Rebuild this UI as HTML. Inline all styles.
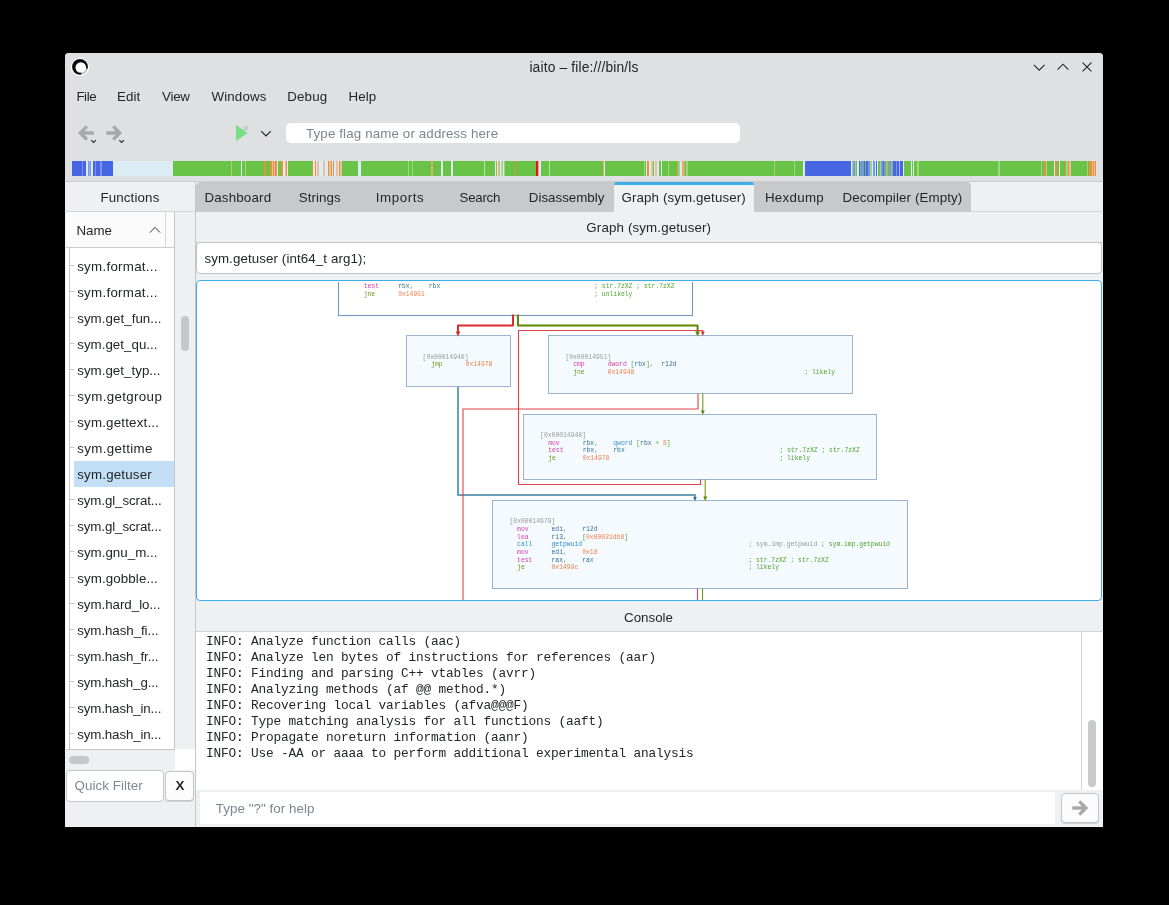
<!DOCTYPE html>
<html><head><meta charset="utf-8"><title>iaito</title>
<style>
html,body{margin:0;padding:0;background:#000;}
body{width:1169px;height:905px;position:relative;overflow:hidden;font-family:"Liberation Sans",sans-serif;}
div{position:absolute;box-sizing:border-box;}
svg{position:absolute;overflow:visible;}
.t{white-space:pre;}
.m{font-family:"Liberation Mono",monospace;white-space:pre;}
</style></head><body>
<div id="root" style="left:0;top:0;width:1169px;height:905px;will-change:transform;">

<div style="left:65px;top:53px;width:1038px;height:774px;background:#eff0f1;border-radius:4px 4px 0 0;overflow:hidden;"></div>
<div style="left:65px;top:53px;width:1038px;height:128px;background:#dee0e2;border-radius:4px 4px 0 0;"></div>
<div style="left:65px;top:181px;width:1038px;height:1px;background:#c9cbcd;"></div>
<svg style="left:70px;top:57px" width="20" height="20" viewBox="0 0 20 20">
<circle cx="10" cy="9.9" r="9.2" fill="#fff"/>
<circle cx="10" cy="9.8" r="7.9" fill="#0a0a0a"/>
<circle cx="10.8" cy="10.5" r="5.3" fill="#fff"/>
<path d="M10.6 18.4 A8.6 8.6 0 0 0 18 12.2 L14 10 Z" fill="#fff" opacity="0.72"/>
</svg>
<div class="t" style="left:529.40px;top:58.00px;line-height:20px;font-size:13.8px;color:#232629;letter-spacing:0.154px;">iaito – file:///bin/ls</div>
<div class="t" style="left:76.40px;top:87.00px;line-height:20px;font-size:13.33px;color:#232629;letter-spacing:-0.428px;">File</div>
<div class="t" style="left:117.10px;top:87.00px;line-height:20px;font-size:13.33px;color:#232629;letter-spacing:0.010px;">Edit</div>
<div class="t" style="left:162.00px;top:87.00px;line-height:20px;font-size:13.33px;color:#232629;letter-spacing:-0.219px;">View</div>
<div class="t" style="left:211.60px;top:87.00px;line-height:20px;font-size:13.33px;color:#232629;letter-spacing:0.106px;">Windows</div>
<div class="t" style="left:287.20px;top:87.00px;line-height:20px;font-size:13.33px;color:#232629;letter-spacing:0.188px;">Debug</div>
<div class="t" style="left:348.50px;top:87.00px;line-height:20px;font-size:13.33px;color:#232629;letter-spacing:0.098px;">Help</div>
<svg style="left:0;top:0" width="1169" height="905" viewBox="0 0 1169 905">
<path d="M78 133 L85.7 125.2 L88.1 127.6 L84.5 131.2 L93.9 131.2 L93.9 134.8 L84.5 134.8 L88.1 138.4 L85.7 140.8 Z" fill="#a6a8ab"/>
<path d="M122.1 133 L114.4 125.2 L112 127.6 L115.6 131.2 L106.2 131.2 L106.2 134.8 L115.6 134.8 L112 138.4 L114.4 140.8 Z" fill="#a6a8ab"/>
<path d="M236 125 L247.7 133 L236 141 Z" fill="#78de86"/>
</svg>
<svg style="left:0;top:0" width="1169" height="905" viewBox="0 0 1169 905"><text x="243.9" y="129.7" font-family="Liberation Sans, sans-serif" font-size="6" fill="#a4a6a9">D</text></svg>
<div style="left:286px;top:123px;width:454px;height:20px;background:#fff;border-radius:5px;"></div>
<div class="t" style="left:306.00px;top:124.00px;line-height:20px;font-size:13.33px;color:#7a8791;letter-spacing:0.134px;">Type flag name or address here</div>
<svg style="left:0;top:0" width="1169" height="905" viewBox="0 0 1169 905" shape-rendering="crispEdges">
<rect x="72" y="161" width="1024" height="15" fill="#68c346"/>
<rect x="72" y="161" width="10.00" height="15" fill="#4666e4"/>
<rect x="82" y="161" width="1.00" height="15" fill="#7a93ec"/>
<rect x="83" y="161" width="3.30" height="15" fill="#4666e4"/>
<rect x="86.3" y="161" width="1.70" height="15" fill="#dcecf5"/>
<rect x="88" y="161" width="1.00" height="15" fill="#7a93ec"/>
<rect x="89" y="161" width="1.00" height="15" fill="#9db0f0"/>
<rect x="90" y="161" width="0.80" height="15" fill="#7a93ec"/>
<rect x="90.8" y="161" width="2.20" height="15" fill="#dcecf5"/>
<rect x="93" y="161" width="1.60" height="15" fill="#4666e4"/>
<rect x="94.6" y="161" width="1.00" height="15" fill="#7a93ec"/>
<rect x="95.6" y="161" width="4.80" height="15" fill="#4666e4"/>
<rect x="100.4" y="161" width="1.40" height="15" fill="#7a93ec"/>
<rect x="101.8" y="161" width="10.90" height="15" fill="#4666e4"/>
<rect x="112.7" y="161" width="59.80" height="15" fill="#dcecf5"/>
<rect x="230.6" y="161" width="1.40" height="15" fill="#9bd683"/>
<rect x="241" y="161" width="1.00" height="15" fill="#dcecf5"/>
<rect x="245" y="161" width="1.00" height="15" fill="#9bd683"/>
<rect x="264" y="161" width="2.20" height="15" fill="#e8913c"/>
<rect x="270" y="161" width="1.60" height="15" fill="#e8913c"/>
<rect x="271.6" y="161" width="1.00" height="15" fill="#e8c19b"/>
<rect x="272.6" y="161" width="1.40" height="15" fill="#e8913c"/>
<rect x="274" y="161" width="1.00" height="15" fill="#e8c19b"/>
<rect x="275" y="161" width="2.00" height="15" fill="#e8913c"/>
<rect x="277" y="161" width="1.00" height="15" fill="#dcecf5"/>
<rect x="281" y="161" width="2.20" height="15" fill="#e8913c"/>
<rect x="283.2" y="161" width="1.80" height="15" fill="#dcecf5"/>
<rect x="285" y="161" width="1.00" height="15" fill="#e8c19b"/>
<rect x="286" y="161" width="1.20" height="15" fill="#e8913c"/>
<rect x="287.2" y="161" width="1.10" height="15" fill="#dcecf5"/>
<rect x="312" y="161" width="1.00" height="15" fill="#e8913c"/>
<rect x="313" y="161" width="2.00" height="15" fill="#dcecf5"/>
<rect x="315" y="161" width="1.00" height="15" fill="#e8913c"/>
<rect x="316" y="161" width="1.00" height="15" fill="#dcecf5"/>
<rect x="317" y="161" width="2.00" height="15" fill="#e8c19b"/>
<rect x="319" y="161" width="3.80" height="15" fill="#dcecf5"/>
<rect x="322.8" y="161" width="2.20" height="15" fill="#e8c19b"/>
<rect x="325" y="161" width="3.00" height="15" fill="#dcecf5"/>
<rect x="328" y="161" width="1.00" height="15" fill="#e8913c"/>
<rect x="329" y="161" width="1.60" height="15" fill="#e8c19b"/>
<rect x="330.6" y="161" width="1.40" height="15" fill="#e8913c"/>
<rect x="332" y="161" width="1.00" height="15" fill="#dcecf5"/>
<rect x="333" y="161" width="1.00" height="15" fill="#e8913c"/>
<rect x="334" y="161" width="2.00" height="15" fill="#dcecf5"/>
<rect x="336" y="161" width="1.60" height="15" fill="#e8c19b"/>
<rect x="337.6" y="161" width="1.40" height="15" fill="#dcecf5"/>
<rect x="339" y="161" width="1.20" height="15" fill="#e8913c"/>
<rect x="340.2" y="161" width="1.60" height="15" fill="#e8c19b"/>
<rect x="358" y="161" width="3.00" height="15" fill="#dcecf5"/>
<rect x="408" y="161" width="1.00" height="15" fill="#9bd683"/>
<rect x="412" y="161" width="1.00" height="15" fill="#9bd683"/>
<rect x="431.2" y="161" width="1.80" height="15" fill="#dcab6c"/>
<rect x="441" y="161" width="2.00" height="15" fill="#dcecf5"/>
<rect x="451" y="161" width="2.20" height="15" fill="#dcecf5"/>
<rect x="484" y="161" width="1.20" height="15" fill="#b9e2ab"/>
<rect x="495" y="161" width="1.00" height="15" fill="#dcecf5"/>
<rect x="496" y="161" width="1.00" height="15" fill="#e8913c"/>
<rect x="497" y="161" width="1.00" height="15" fill="#dcecf5"/>
<rect x="498" y="161" width="1.60" height="15" fill="#9bd683"/>
<rect x="499.6" y="161" width="0.90" height="15" fill="#dcecf5"/>
<rect x="500.5" y="161" width="1.50" height="15" fill="#e8c19b"/>
<rect x="502" y="161" width="1.00" height="15" fill="#9bd683"/>
<rect x="503" y="161" width="1.00" height="15" fill="#dcecf5"/>
<rect x="504" y="161" width="1.00" height="15" fill="#9bd683"/>
<rect x="513.8" y="161" width="1.20" height="15" fill="#e8913c"/>
<rect x="536" y="161" width="2.20" height="15" fill="#f01010"/>
<rect x="538.2" y="161" width="1.00" height="15" fill="#f0a0a0"/>
<rect x="539.2" y="161" width="2.10" height="15" fill="#dcecf5"/>
<rect x="548.8" y="161" width="1.40" height="15" fill="#b9e2ab"/>
<rect x="603" y="161" width="1.20" height="15" fill="#dcab6c"/>
<rect x="604.2" y="161" width="0.80" height="15" fill="#dcecf5"/>
<rect x="643.8" y="161" width="1.20" height="15" fill="#9bd683"/>
<rect x="646" y="161" width="1.00" height="15" fill="#dcecf5"/>
<rect x="647" y="161" width="2.00" height="15" fill="#e8913c"/>
<rect x="649" y="161" width="2.00" height="15" fill="#dcecf5"/>
<rect x="651" y="161" width="1.80" height="15" fill="#e8c19b"/>
<rect x="654" y="161" width="1.00" height="15" fill="#dcecf5"/>
<rect x="655" y="161" width="2.00" height="15" fill="#e8c19b"/>
<rect x="657" y="161" width="1.80" height="15" fill="#dcecf5"/>
<rect x="660.7" y="161" width="1.30" height="15" fill="#dcecf5"/>
<rect x="668" y="161" width="1.00" height="15" fill="#9bd683"/>
<rect x="677" y="161" width="1.20" height="15" fill="#e8913c"/>
<rect x="678.2" y="161" width="1.80" height="15" fill="#9bd683"/>
<rect x="680" y="161" width="2.20" height="15" fill="#dcecf5"/>
<rect x="682.2" y="161" width="2.40" height="15" fill="#dcab6c"/>
<rect x="686" y="161" width="1.60" height="15" fill="#9bd683"/>
<rect x="774" y="161" width="1.00" height="15" fill="#9bd683"/>
<rect x="794" y="161" width="1.00" height="15" fill="#9bd683"/>
<rect x="803" y="161" width="2.00" height="15" fill="#dcecf5"/>
<rect x="805" y="161" width="46.00" height="15" fill="#4666e4"/>
<rect x="851" y="161" width="1.00" height="15" fill="#dcecf5"/>
<rect x="852" y="161" width="1.00" height="15" fill="#9bd683"/>
<rect x="853" y="161" width="1.60" height="15" fill="#7a93ec"/>
<rect x="854.6" y="161" width="1.00" height="15" fill="#9bd683"/>
<rect x="857" y="161" width="2.00" height="15" fill="#dcecf5"/>
<rect x="859" y="161" width="1.00" height="15" fill="#4666e4"/>
<rect x="861" y="161" width="2.60" height="15" fill="#7a93ec"/>
<rect x="863.6" y="161" width="1.40" height="15" fill="#4666e4"/>
<rect x="866" y="161" width="1.80" height="15" fill="#4666e4"/>
<rect x="867.8" y="161" width="2.20" height="15" fill="#7a93ec"/>
<rect x="870" y="161" width="2.00" height="15" fill="#9bd683"/>
<rect x="872" y="161" width="1.00" height="15" fill="#dcecf5"/>
<rect x="873" y="161" width="1.50" height="15" fill="#7a93ec"/>
<rect x="874.5" y="161" width="1.00" height="15" fill="#dcecf5"/>
<rect x="875.5" y="161" width="1.50" height="15" fill="#4666e4"/>
<rect x="877" y="161" width="1.00" height="15" fill="#dcecf5"/>
<rect x="879.6" y="161" width="1.40" height="15" fill="#9bd683"/>
<rect x="881" y="161" width="2.00" height="15" fill="#7a93ec"/>
<rect x="883" y="161" width="1.30" height="15" fill="#4666e4"/>
<rect x="884.3" y="161" width="1.70" height="15" fill="#7aa99a"/>
<rect x="886" y="161" width="2.00" height="15" fill="#8fc47a"/>
<rect x="888" y="161" width="2.50" height="15" fill="#7aa99a"/>
<rect x="890.5" y="161" width="2.00" height="15" fill="#8fb0a8"/>
<rect x="892.5" y="161" width="3.50" height="15" fill="#4666e4"/>
<rect x="896" y="161" width="1.00" height="15" fill="#7a93ec"/>
<rect x="897" y="161" width="2.00" height="15" fill="#4666e4"/>
<rect x="899" y="161" width="1.00" height="15" fill="#a8b8f2"/>
<rect x="900" y="161" width="3.00" height="15" fill="#4666e4"/>
<rect x="903" y="161" width="1.00" height="15" fill="#dcecf5"/>
<rect x="910.8" y="161" width="1.20" height="15" fill="#dcecf5"/>
<rect x="913" y="161" width="1.00" height="15" fill="#dcecf5"/>
<rect x="917" y="161" width="2.00" height="15" fill="#9bd683"/>
<rect x="998" y="161" width="1.50" height="15" fill="#9bd683"/>
<rect x="1041" y="161" width="1.00" height="15" fill="#9bd683"/>
<rect x="1043.6" y="161" width="2.40" height="15" fill="#e8913c"/>
<rect x="1046" y="161" width="1.00" height="15" fill="#9bd683"/>
<rect x="1054" y="161" width="1.00" height="15" fill="#dcecf5"/>
<rect x="1055" y="161" width="1.50" height="15" fill="#e8913c"/>
<rect x="1056.5" y="161" width="0.70" height="15" fill="#e8c19b"/>
<rect x="1059" y="161" width="1.20" height="15" fill="#dcecf5"/>
<rect x="1065" y="161" width="1.00" height="15" fill="#e8913c"/>
<rect x="1066" y="161" width="2.00" height="15" fill="#9bd683"/>
<rect x="1068" y="161" width="1.20" height="15" fill="#e8913c"/>
<rect x="1069.2" y="161" width="2.00" height="15" fill="#e8c19b"/>
<rect x="1087" y="161" width="1.00" height="15" fill="#9bd683"/>
<rect x="1089" y="161" width="2.50" height="15" fill="#e8913c"/>
<rect x="1091.5" y="161" width="1.00" height="15" fill="#e8c19b"/>
<rect x="1092.5" y="161" width="1.50" height="15" fill="#e8913c"/>
<rect x="1094" y="161" width="1.00" height="15" fill="#e8c19b"/>
<rect x="1095" y="161" width="1.00" height="15" fill="#e8913c"/>
</svg>
<div style="left:65px;top:182px;width:130px;height:645px;background:#eff0f1;"></div>
<div style="left:195px;top:182px;width:1px;height:645px;background:#c4c6c8;"></div>
<div class="t" style="left:100.40px;top:188.00px;line-height:20px;font-size:13.33px;color:#232629;letter-spacing:0.140px;">Functions</div>
<div style="left:65px;top:211px;width:130px;height:1px;background:#d3d5d7;"></div>
<div style="left:66px;top:212px;width:109px;height:538px;background:#fff;border-bottom:1px solid #c4c6c8;"></div>
<div style="left:66px;top:212px;width:109px;height:35px;background:#fbfbfc;"></div>
<div style="left:66px;top:247px;width:109px;height:1px;background:#c9cbcd;"></div>
<div style="left:165px;top:212px;width:1px;height:35px;background:#d6d8da;"></div>
<div style="left:174px;top:212px;width:1px;height:538px;background:#c4c6c8;"></div>
<div class="t" style="left:76.40px;top:221.00px;line-height:20px;font-size:13.33px;color:#232629;letter-spacing:0.018px;">Name</div>
<div style="left:74px;top:461px;width:100px;height:26px;background:#c2dff5;"></div>
<div style="left:69px;top:248px;width:1px;height:502px;background:#c3c5c7;"></div>
<div style="left:70px;top:265px;width:4px;height:1px;background:#c3c5c7;"></div>
<div class="t" style="left:77.20px;top:257.00px;line-height:20px;font-size:13.33px;color:#232629;letter-spacing:0.272px;">sym.format...</div>
<div style="left:70px;top:291px;width:4px;height:1px;background:#c3c5c7;"></div>
<div class="t" style="left:77.20px;top:283.00px;line-height:20px;font-size:13.33px;color:#232629;letter-spacing:0.272px;">sym.format...</div>
<div style="left:70px;top:317px;width:4px;height:1px;background:#c3c5c7;"></div>
<div class="t" style="left:77.20px;top:309.00px;line-height:20px;font-size:13.33px;color:#232629;letter-spacing:0.046px;">sym.get_fun...</div>
<div style="left:70px;top:343px;width:4px;height:1px;background:#c3c5c7;"></div>
<div class="t" style="left:77.20px;top:335.00px;line-height:20px;font-size:13.33px;color:#232629;letter-spacing:0.025px;">sym.get_qu...</div>
<div style="left:70px;top:369px;width:4px;height:1px;background:#c3c5c7;"></div>
<div class="t" style="left:77.20px;top:361.00px;line-height:20px;font-size:13.33px;color:#232629;letter-spacing:0.025px;">sym.get_typ...</div>
<div style="left:70px;top:395px;width:4px;height:1px;background:#c3c5c7;"></div>
<div class="t" style="left:77.20px;top:387.00px;line-height:20px;font-size:13.33px;color:#232629;letter-spacing:0.351px;">sym.getgroup</div>
<div style="left:70px;top:421px;width:4px;height:1px;background:#c3c5c7;"></div>
<div class="t" style="left:77.20px;top:413.00px;line-height:20px;font-size:13.33px;color:#232629;letter-spacing:0.195px;">sym.gettext...</div>
<div style="left:70px;top:447px;width:4px;height:1px;background:#c3c5c7;"></div>
<div class="t" style="left:77.20px;top:439.00px;line-height:20px;font-size:13.33px;color:#232629;letter-spacing:0.344px;">sym.gettime</div>
<div class="t" style="left:77.20px;top:465.00px;line-height:20px;font-size:13.33px;color:#232629;letter-spacing:0.201px;">sym.getuser</div>
<div style="left:70px;top:499px;width:4px;height:1px;background:#c3c5c7;"></div>
<div class="t" style="left:77.20px;top:491.00px;line-height:20px;font-size:13.33px;color:#232629;letter-spacing:-0.096px;">sym.gl_scrat...</div>
<div style="left:70px;top:525px;width:4px;height:1px;background:#c3c5c7;"></div>
<div class="t" style="left:77.20px;top:517.00px;line-height:20px;font-size:13.33px;color:#232629;letter-spacing:-0.096px;">sym.gl_scrat...</div>
<div style="left:70px;top:551px;width:4px;height:1px;background:#c3c5c7;"></div>
<div class="t" style="left:77.20px;top:543.00px;line-height:20px;font-size:13.33px;color:#232629;letter-spacing:0.027px;">sym.gnu_m...</div>
<div style="left:70px;top:577px;width:4px;height:1px;background:#c3c5c7;"></div>
<div class="t" style="left:77.20px;top:569.00px;line-height:20px;font-size:13.33px;color:#232629;letter-spacing:0.111px;">sym.gobble...</div>
<div style="left:70px;top:603px;width:4px;height:1px;background:#c3c5c7;"></div>
<div class="t" style="left:77.20px;top:595.00px;line-height:20px;font-size:13.33px;color:#232629;letter-spacing:-0.031px;">sym.hard_lo...</div>
<div style="left:70px;top:629px;width:4px;height:1px;background:#c3c5c7;"></div>
<div class="t" style="left:77.20px;top:621.00px;line-height:20px;font-size:13.33px;color:#232629;letter-spacing:-0.072px;">sym.hash_fi...</div>
<div style="left:70px;top:655px;width:4px;height:1px;background:#c3c5c7;"></div>
<div class="t" style="left:77.20px;top:647.00px;line-height:20px;font-size:13.33px;color:#232629;letter-spacing:-0.128px;">sym.hash_fr...</div>
<div style="left:70px;top:681px;width:4px;height:1px;background:#c3c5c7;"></div>
<div class="t" style="left:77.20px;top:673.00px;line-height:20px;font-size:13.33px;color:#232629;letter-spacing:-0.139px;">sym.hash_g...</div>
<div style="left:70px;top:707px;width:4px;height:1px;background:#c3c5c7;"></div>
<div class="t" style="left:77.20px;top:699.00px;line-height:20px;font-size:13.33px;color:#232629;letter-spacing:-0.126px;">sym.hash_in...</div>
<div style="left:70px;top:733px;width:4px;height:1px;background:#c3c5c7;"></div>
<div class="t" style="left:77.20px;top:725.00px;line-height:20px;font-size:13.33px;color:#232629;letter-spacing:-0.126px;">sym.hash_in...</div>
<div style="left:181px;top:316px;width:8px;height:35px;background:#c5c8ca;border-radius:4px;"></div>
<div style="left:175px;top:749px;width:20px;height:21px;background:#fff;"></div>
<div style="left:69px;top:756px;width:20px;height:8px;background:#c5c8ca;border-radius:4px;"></div>
<div style="left:66px;top:770px;width:98px;height:32px;background:#fff;border:1px solid #c3c6c9;border-radius:4px;"></div>
<div class="t" style="left:74.60px;top:776.40px;line-height:20px;font-size:13.33px;color:#7a8791;letter-spacing:0.054px;">Quick Filter</div>
<div style="left:165px;top:771px;width:29px;height:30px;background:#fcfcfc;border:1px solid #c3c6c9;border-radius:4px;box-shadow:0 1px 0 rgba(0,0,0,0.12);"></div>
<div class="t" style="left:175.50px;top:776.40px;line-height:20px;font-size:13.33px;color:#232629;letter-spacing:0.009px;font-weight:bold;">X</div>
<div style="left:196px;top:182px;width:775px;height:30px;background:#c8c9cb;border-radius:5px 4px 0 0;"></div>
<div style="left:971px;top:211px;width:132px;height:1px;background:#d3d5d7;"></div>
<div style="left:614px;top:182px;width:140px;height:30px;background:#eff0f1;border-radius:4px 4px 0 0;"></div>
<div style="left:614px;top:182px;width:140px;height:3px;background:#3daee9;border-radius:4px 4px 0 0;"></div>
<div class="t" style="left:204.40px;top:188.00px;line-height:20px;font-size:13.33px;color:#232629;letter-spacing:0.191px;">Dashboard</div>
<div class="t" style="left:298.80px;top:188.00px;line-height:20px;font-size:13.33px;color:#232629;letter-spacing:0.053px;">Strings</div>
<div class="t" style="left:375.80px;top:188.00px;line-height:20px;font-size:13.33px;color:#232629;letter-spacing:0.577px;">Imports</div>
<div class="t" style="left:459.60px;top:188.00px;line-height:20px;font-size:13.33px;color:#232629;letter-spacing:-0.284px;">Search</div>
<div class="t" style="left:528.80px;top:188.00px;line-height:20px;font-size:13.33px;color:#232629;letter-spacing:0.002px;">Disassembly</div>
<div class="t" style="left:621.50px;top:188.00px;line-height:20px;font-size:13.33px;color:#232629;letter-spacing:0.112px;">Graph (sym.getuser)</div>
<div class="t" style="left:764.90px;top:188.00px;line-height:20px;font-size:13.33px;color:#232629;letter-spacing:0.295px;">Hexdump</div>
<div class="t" style="left:842.50px;top:188.00px;line-height:20px;font-size:13.33px;color:#232629;letter-spacing:0.120px;">Decompiler (Empty)</div>
<div class="t" style="left:586.30px;top:218.00px;line-height:20px;font-size:13.33px;color:#232629;letter-spacing:0.140px;">Graph (sym.getuser)</div>
<div style="left:196px;top:242px;width:907px;height:1px;background:#c9cbcd;"></div>
<div style="left:196px;top:242px;width:906px;height:32px;background:#fff;border:1px solid #c0c2c4;border-radius:4px;"></div>
<div class="t" style="left:204.40px;top:249.00px;line-height:20px;font-size:13.33px;color:#232629;letter-spacing:0.099px;">sym.getuser (int64_t arg1);</div>
<div style="left:196px;top:280px;width:906px;height:321px;background:#fff;border:1px solid #3daee9;border-radius:4px;"></div>
<svg style="left:0;top:0" width="1169" height="905" viewBox="0 0 1169 905">
<defs><clipPath id="gc"><rect x="197" y="282" width="904" height="318"/></clipPath></defs>
<g clip-path="url(#gc)">
<rect x="338.5" y="270.5" width="354" height="45" fill="#ffffff" stroke="#7397bf" stroke-width="1.1"/>
<rect x="406.5" y="335.5" width="104.0" height="51.0" fill="#f5fafe" stroke="#9ab5d3" stroke-width="1"/>
<rect x="548.5" y="335.5" width="304.0" height="58.0" fill="#f5fafe" stroke="#9ab5d3" stroke-width="1"/>
<rect x="523.5" y="414.5" width="353.0" height="65.0" fill="#f5fafe" stroke="#9ab5d3" stroke-width="1"/>
<rect x="492.5" y="500.5" width="415.0" height="88.0" fill="#f5fafe" stroke="#9ab5d3" stroke-width="1"/>
<path d="M513 314.5 V325.5 H458 V333" fill="none" stroke="#dc2a2a" stroke-width="2" stroke-linejoin="round"/>
<path d="M455.7 331.5 L460.3 331.5 L458 336.5 Z" fill="#dc2a2a"/>
<path d="M518 314.5 V325.5 H697.6 V333" fill="none" stroke="#5b8a00" stroke-width="2" stroke-linejoin="round"/>
<path d="M695.3000000000001 331.5 L699.9 331.5 L697.6 336.5 Z" fill="#5b8a00"/>
<path d="M458 386.5 V495 H695 V498" fill="none" stroke="#6a9fb8" stroke-width="2" stroke-linejoin="round"/>
<path d="M693.1 497 L696.9 497 L695 501 Z" fill="#2f6f96"/>
<path d="M698 393.5 V409 H463 V601" fill="none" stroke="#e2414a" stroke-width="1.1"/>
<path d="M702.8 393.5 V412" fill="none" stroke="#6f9a12" stroke-width="1.1"/>
<path d="M700.9 410.5 L704.6999999999999 410.5 L702.8 415 Z" fill="#5b8a00"/>
<path d="M700.5 479.5 V484.5 H518.5 V330.5 H702.8 V333" fill="none" stroke="#e2414a" stroke-width="1.1" stroke-linejoin="round"/>
<path d="M700.9 331.5 L704.6999999999999 331.5 L702.8 336 Z" fill="#dc2a2a"/>
<path d="M705.2 479.5 V498" fill="none" stroke="#6f9a12" stroke-width="1.1"/>
<path d="M703.3000000000001 496.5 L707.1 496.5 L705.2 501 Z" fill="#5b8a00"/>
<path d="M697.5 588.5 V601" fill="none" stroke="#e2414a" stroke-width="1.1"/>
<path d="M702.5 588.5 V601" fill="none" stroke="#6f9a12" stroke-width="1.1"/>
<g font-family="Liberation Mono, monospace" font-size="6.383">
<text x="363.7" y="288.00" xml:space="preserve"><tspan fill="#d63fa5">test</tspan><tspan fill="#35708f">     </tspan><tspan fill="#35708f">rbx</tspan><tspan fill="#5aa838">,</tspan><tspan fill="#35708f">    rbx</tspan></text>
<text x="594.2" y="288.00" xml:space="preserve"><tspan fill="#4ea52c">; str.7zXZ ; str.7zXZ</tspan></text>
<text x="363.7" y="296.00" xml:space="preserve"><tspan fill="#6b9a1e">jne</tspan><tspan fill="#35708f">      </tspan><tspan fill="#f0824e">0x14951</tspan></text>
<text x="594.2" y="296.00" xml:space="preserve"><tspan fill="#4ea52c">; unlikely</tspan></text>
<text x="422.6" y="359.00" xml:space="preserve"><tspan fill="#9a9a9a">[0x00014940]</tspan></text>
<text x="431.2" y="366.00" xml:space="preserve"><tspan fill="#6b9a1e">jmp</tspan><tspan fill="#35708f">      </tspan><tspan fill="#f0824e">0x14978</tspan></text>
<text x="565.4" y="359.00" xml:space="preserve"><tspan fill="#9a9a9a">[0x00014951]</tspan></text>
<text x="573.2" y="366.00" xml:space="preserve"><tspan fill="#d63fa5">cmp</tspan><tspan fill="#35708f">      </tspan><tspan fill="#d63fa5">dword </tspan><tspan fill="#5aa838">[</tspan><tspan fill="#35708f">rbx</tspan><tspan fill="#5aa838">],</tspan><tspan fill="#35708f">  r12d</tspan></text>
<text x="573.2" y="374.00" xml:space="preserve"><tspan fill="#6b9a1e">jne</tspan><tspan fill="#35708f">      </tspan><tspan fill="#f0824e">0x14948</tspan></text>
<text x="804.4" y="374.00" xml:space="preserve"><tspan fill="#4ea52c">; likely</tspan></text>
<text x="540.1" y="437.00" xml:space="preserve"><tspan fill="#9a9a9a">[0x00014948]</tspan></text>
<text x="548.2" y="445.00" xml:space="preserve"><tspan fill="#d63fa5">mov</tspan><tspan fill="#35708f">      </tspan><tspan fill="#35708f">rbx</tspan><tspan fill="#5aa838">,</tspan><tspan fill="#35708f">    </tspan><tspan fill="#3a96c8">qword </tspan><tspan fill="#5aa838">[</tspan><tspan fill="#35708f">rbx</tspan><tspan fill="#5aa838"> + </tspan><tspan fill="#f0824e">8</tspan><tspan fill="#5aa838">]</tspan></text>
<text x="548.2" y="452.00" xml:space="preserve"><tspan fill="#d63fa5">test</tspan><tspan fill="#35708f">     </tspan><tspan fill="#35708f">rbx</tspan><tspan fill="#5aa838">,</tspan><tspan fill="#35708f">    rbx</tspan></text>
<text x="779.4" y="452.00" xml:space="preserve"><tspan fill="#4ea52c">; str.7zXZ ; str.7zXZ</tspan></text>
<text x="548.2" y="460.00" xml:space="preserve"><tspan fill="#6b9a1e">je</tspan><tspan fill="#35708f">       </tspan><tspan fill="#f0824e">0x14978</tspan></text>
<text x="779.4" y="460.00" xml:space="preserve"><tspan fill="#4ea52c">; likely</tspan></text>
<text x="509.5" y="523.00" xml:space="preserve"><tspan fill="#9a9a9a">[0x00014978]</tspan></text>
<text x="517.1" y="531.00" xml:space="preserve"><tspan fill="#d63fa5">mov</tspan><tspan fill="#35708f">      </tspan><tspan fill="#35708f">edi</tspan><tspan fill="#5aa838">,</tspan><tspan fill="#35708f">    r12d</tspan></text>
<text x="517.1" y="539.00" xml:space="preserve"><tspan fill="#d63fa5">lea</tspan><tspan fill="#35708f">      </tspan><tspan fill="#35708f">r13</tspan><tspan fill="#5aa838">,</tspan><tspan fill="#35708f">    </tspan><tspan fill="#5aa838">[</tspan><tspan fill="#f0824e">0x00021db8</tspan><tspan fill="#5aa838">]</tspan></text>
<text x="517.1" y="546.00" xml:space="preserve"><tspan fill="#2f8fc0">call</tspan><tspan fill="#35708f">     </tspan><tspan fill="#2f8fc0">getpwuid</tspan></text>
<text x="748.4" y="546.00" xml:space="preserve"><tspan fill="#9a9a9a">; sym.imp.getpwuid </tspan><tspan fill="#4ea52c">; sym.imp.getpwuid</tspan></text>
<text x="517.1" y="554.00" xml:space="preserve"><tspan fill="#d63fa5">mov</tspan><tspan fill="#35708f">      </tspan><tspan fill="#35708f">edi</tspan><tspan fill="#5aa838">,</tspan><tspan fill="#35708f">    </tspan><tspan fill="#f0824e">0x18</tspan></text>
<text x="517.1" y="562.00" xml:space="preserve"><tspan fill="#d63fa5">test</tspan><tspan fill="#35708f">     </tspan><tspan fill="#35708f">rax</tspan><tspan fill="#5aa838">,</tspan><tspan fill="#35708f">    rax</tspan></text>
<text x="748.4" y="562.00" xml:space="preserve"><tspan fill="#4ea52c">; str.7zXZ ; str.7zXZ</tspan></text>
<text x="517.1" y="569.00" xml:space="preserve"><tspan fill="#6b9a1e">je</tspan><tspan fill="#35708f">       </tspan><tspan fill="#f0824e">0x1499c</tspan></text>
<text x="748.4" y="569.00" xml:space="preserve"><tspan fill="#4ea52c">; likely</tspan></text>
</g></g></svg>
<div class="t" style="left:624.00px;top:608.00px;line-height:20px;font-size:13.33px;color:#232629;letter-spacing:0.018px;">Console</div>
<div style="left:196px;top:631px;width:907px;height:1px;background:#d3d5d7;"></div>
<div style="left:196px;top:632px;width:907px;height:158px;background:#fff;"></div>
<div style="left:1081px;top:632px;width:1px;height:158px;background:#d0d2d4;"></div>
<div style="left:1088px;top:720px;width:8px;height:67px;background:#c8cacc;border-radius:4px;"></div>
<div class="m" style="left:206px;top:634px;line-height:16px;font-size:12.8px;letter-spacing:-0.181px;color:#232629;">INFO: Analyze function calls (aac)</div>
<div class="m" style="left:206px;top:650px;line-height:16px;font-size:12.8px;letter-spacing:-0.181px;color:#232629;">INFO: Analyze len bytes of instructions for references (aar)</div>
<div class="m" style="left:206px;top:666px;line-height:16px;font-size:12.8px;letter-spacing:-0.181px;color:#232629;">INFO: Finding and parsing C++ vtables (avrr)</div>
<div class="m" style="left:206px;top:682px;line-height:16px;font-size:12.8px;letter-spacing:-0.181px;color:#232629;">INFO: Analyzing methods (af @@ method.*)</div>
<div class="m" style="left:206px;top:698px;line-height:16px;font-size:12.8px;letter-spacing:-0.181px;color:#232629;">INFO: Recovering local variables (afva@@@F)</div>
<div class="m" style="left:206px;top:714px;line-height:16px;font-size:12.8px;letter-spacing:-0.181px;color:#232629;">INFO: Type matching analysis for all functions (aaft)</div>
<div class="m" style="left:206px;top:730px;line-height:16px;font-size:12.8px;letter-spacing:-0.181px;color:#232629;">INFO: Propagate noreturn information (aanr)</div>
<div class="m" style="left:206px;top:746px;line-height:16px;font-size:12.8px;letter-spacing:-0.181px;color:#232629;">INFO: Use -AA or aaaa to perform additional experimental analysis</div>
<div style="left:200px;top:792px;width:855px;height:32px;background:#fff;"></div>
<div class="t" style="left:215.70px;top:799.00px;line-height:20px;font-size:13.33px;color:#7a8791;letter-spacing:0.074px;">Type "?" for help</div>
<div style="left:1061px;top:793px;width:38px;height:30px;background:#fcfcfc;border:1px solid #c3c6c9;border-radius:4px;box-shadow:0 1px 0 rgba(0,0,0,0.12);"></div>
<svg style="left:0;top:0" width="1169" height="905" viewBox="0 0 1169 905">
<path d="M1088.2 808 L1080.5 800.2 L1078.1 802.6 L1081.7 806.2 L1072.3 806.2 L1072.3 809.8 L1081.7 809.8 L1078.1 813.4 L1080.5 815.8 Z" fill="#a6a8ab"/>
</svg>
<svg style="left:0;top:0" width="1169" height="905" viewBox="0 0 1169 905" fill="none" stroke="#232629" stroke-width="1.1" stroke-linecap="butt">
<path d="M1033.8 64.8 L1039.2 70.2 L1044.6 64.8"/>
<path d="M1057.6 69.6 L1063 64.2 L1068.4 69.6"/>
<path d="M1082.6 62.6 L1091.4 71.4 M1091.4 62.6 L1082.6 71.4"/>
<path d="M261.2 131.2 L266 136 L270.8 131.2" stroke-width="1.2"/>
<path d="M91.2 140.2 L93.55 142.5 L95.9 140.2"/>
<path d="M119.3 140.2 L121.65 142.5 L124 140.2"/>
<path d="M149.9 232.6 L155 227.3 L160.1 232.6" stroke-width="1" stroke="#34373a"/>
</svg>
</div></body></html>
